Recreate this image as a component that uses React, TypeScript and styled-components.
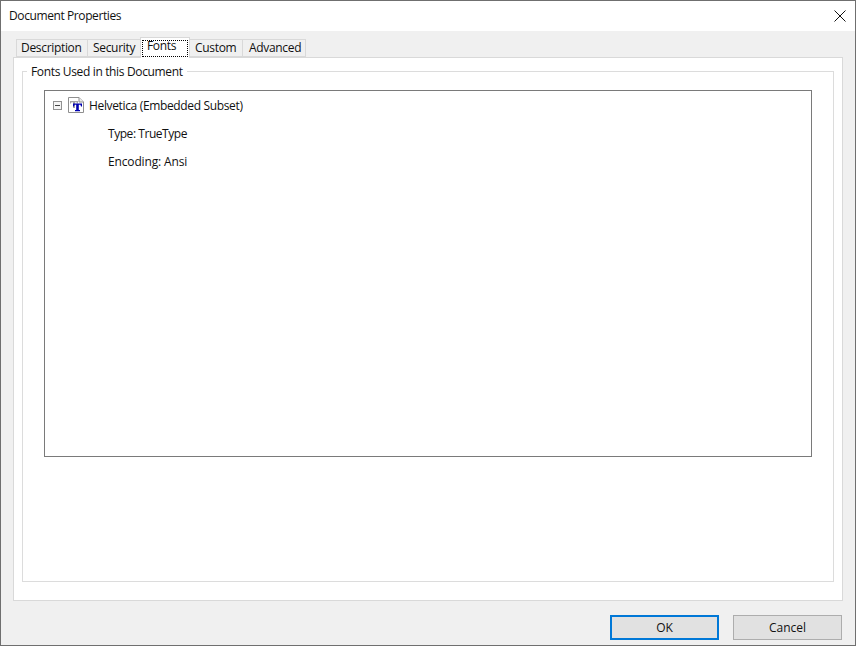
import React from 'react';
import styled, { createGlobalStyle } from 'styled-components';

const GlobalStyle = createGlobalStyle`
  html, body {
    margin: 0;
    padding: 0;
    background: #f0f0f0;
  }
`;

const Dialog = styled.div`
  box-sizing: border-box;
  width: 856px;
  height: 646px;
  display: flex;
  flex-direction: column;
  border: 1px solid #6f6f6f;
  background: #f0f0f0;
  font-family: 'Open Sans', 'Liberation Sans', sans-serif;
  font-size: 12px;
  color: #111;
`;

const TitleBar = styled.div`
  height: 30px;
  display: flex;
  align-items: center;
  justify-content: space-between;
  padding: 0 9px 2px 8px;
  box-sizing: border-box;
  background: #fff;
  flex-shrink: 0;
`;

const Title = styled.span`
  letter-spacing: -0.4px;
`;

const CloseButton = styled.svg`
  width: 12px;
  height: 12px;
  display: block;
  margin-top: 2px;
`;

const Body = styled.div`
  flex: 1;
  display: flex;
  flex-direction: column;
  padding: 5px 12px 0 12px;
`;

const TabRow = styled.div`
  height: 21px;
  display: flex;
  align-items: flex-end;
  padding-left: 3px;
  position: relative;
  z-index: 1;
`;

const Tab = styled.div<{ $active?: boolean; $width: number; $inset: number }>`
  box-sizing: border-box;
  width: ${p => p.$width}px;
  height: ${p => (p.$active ? 21 : 18)}px;
  display: flex;
  padding-top: ${p => (p.$active ? 2 : 0)}px;
  padding-left: ${p => p.$inset}px;
  margin-bottom: ${p => (p.$active ? -1 : 0)}px;
  background: ${p => (p.$active ? '#fff' : '#f0f0f0')};
  border: 1px solid #d9d9d9;
  border-bottom: ${p => (p.$active ? 'none' : '1px solid #d9d9d9')};
  margin-right: -1px;
  letter-spacing: -0.32px;
  line-height: 16px;
`;

const FocusRing = styled.span`
  box-sizing: border-box;
  width: 46px;
  height: 17px;
  padding-left: 4px;
  border: 1px dotted #000;
  line-height: 9px;
`;

const TabPanel = styled.div`
  flex: none;
  height: 544px;
  box-sizing: border-box;
  background: #fff;
  border: 1px solid #d9d9d9;
  padding: 4px 8px 0 8px;
`;

const GroupBox = styled.fieldset`
  box-sizing: border-box;
  height: 520px;
  margin: 0;
  padding: 10px 0 0 0;
  border: 1px solid #dcdcdc;
`;

const GroupLegend = styled.legend`
  margin-left: 4px;
  padding: 2px 4px 0;
  line-height: 16px;
  letter-spacing: -0.35px;
`;

const FontList = styled.div`
  box-sizing: border-box;
  height: 367px;
  margin: 0 21px;
  border: 1px solid #7a7a7a;
  padding: 5px 8px;
`;

const FontRow = styled.div`
  height: 18px;
  display: flex;
  align-items: center;
  gap: 6px;
  letter-spacing: -0.35px;
`;

const Expander = styled.svg`
  width: 9px;
  height: 9px;
  display: block;
`;

const FontIcon = styled.svg`
  width: 16px;
  height: 16px;
  display: block;
  margin-right: -1px;
`;

const FontName = styled.span`
  padding-top: 2px;
  line-height: 16px;
`;

const Detail = styled.div<{ $spacing: number }>`
  height: 16px;
  margin-top: 12px;
  padding-left: 55px;
  line-height: 16px;
  letter-spacing: ${p => p.$spacing}px;
`;

const Footer = styled.div`
  flex: 1;
  display: flex;
  justify-content: flex-end;
  align-items: flex-start;
  gap: 14px;
  padding-top: 14px;
  padding-right: 1px;
`;

const Button = styled.button<{ $primary?: boolean }>`
  box-sizing: border-box;
  width: 109px;
  height: 25px;
  padding: 0;
  font: inherit;
  color: inherit;
  background: #e1e1e1;
  border: ${p => (p.$primary ? '2px solid #0078d7' : '1px solid #adadad')};
`;

const App = () => {
  return (
    <>
      <GlobalStyle />
      <Dialog>
        <TitleBar>
          <Title>Document Properties</Title>
          <CloseButton viewBox="0 0 12 12">
            <path d="M0.5 0.5 L11.5 11.5 M11.5 0.5 L0.5 11.5" stroke="#111" strokeWidth="1" fill="none" />
          </CloseButton>
        </TitleBar>
        <Body>
          <TabRow>
            <Tab $width={72} $inset={4}>Description</Tab>
            <Tab $width={54} $inset={5}>Security</Tab>
            <Tab $width={50} $inset={1} $active>
              <FocusRing>Fonts</FocusRing>
            </Tab>
            <Tab $width={54} $inset={5}>Custom</Tab>
            <Tab $width={64} $inset={6}>Advanced</Tab>
          </TabRow>
          <TabPanel>
            <GroupBox>
              <GroupLegend>Fonts Used in this Document</GroupLegend>
              <FontList>
                <FontRow>
                  <Expander viewBox="0 0 9 9">
                    <rect x="0.5" y="0.5" width="8" height="8" fill="#f4f4f4" stroke="#919191" />
                    <path d="M2 4.5 H7" stroke="#444" />
                  </Expander>
                  <FontIcon viewBox="0 0 16 16">
                    <path d="M0.5 0.5 H11 L15.5 5 V15.5 H0.5 Z" fill="#fff" stroke="#8f8f8f" />
                    <path d="M11 0.5 V5 H15.5" fill="#ececec" stroke="#8f8f8f" />
                    <path d="M2 4 H10 V6.5 H9 L8.6 5.2 H7 V11 H5 V5.2 H3.4 L3 6.5 H2 Z" fill="#a3a3a3" />
                    <path d="M5 6.5 H14 V9.5 H13 L12.4 7.8 H10.8 V13 H12 V14.2 H7 V13 H8.2 V7.8 H6.6 L6 9.5 H5 Z" fill="#0000b0" />
                  </FontIcon>
                  <FontName>Helvetica (Embedded Subset)</FontName>
                </FontRow>
                <Detail $spacing={-0.45}>Type: TrueType</Detail>
                <Detail $spacing={-0.15}>Encoding: Ansi</Detail>
              </FontList>
            </GroupBox>
          </TabPanel>
          <Footer>
            <Button $primary>OK</Button>
            <Button>Cancel</Button>
          </Footer>
        </Body>
      </Dialog>
    </>
  );
};

export default App;
